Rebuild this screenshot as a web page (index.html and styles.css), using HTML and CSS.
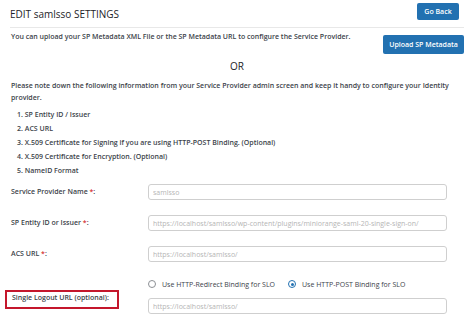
FILE: index.html
```html
<!DOCTYPE html>
<html lang="en">
<head>
<meta charset="utf-8">
<title>EDIT samlsso SETTINGS</title>
<link rel="stylesheet" href="styles.css">
</head>
<body>
<div class="page">
  <div class="header">
    <h1 class="title">EDIT samlsso SETTINGS</h1>
    <button class="btn btn-back" type="button">Go Back</button>
  </div>
  <div class="intro">
    <p class="intro-text">You can upload your SP Metadata XML File or the SP Metadata URL to configure the Service Provider.</p>
    <button class="btn btn-upload" type="button">Upload SP Metadata</button>
  </div>
  <div class="or">OR</div>
  <p class="note">Please note down the following information from your Service Provider admin screen and keep it handy to configure your Identity provider.</p>
  <ol class="items">
    <li>SP Entity ID / Issuer</li>
    <li>ACS URL</li>
    <li>X.509 Certificate for Signing if you are using HTTP-POST Binding. (Optional)</li>
    <li>X.509 Certificate for Encryption. (Optional)</li>
    <li>NameID Format</li>
  </ol>
  <div class="form">
    <label class="label">Service Provider Name <span class="req">*</span>:</label>
    <input class="input" type="text" value="samlsso">
    <label class="label">SP Entity ID or Issuer <span class="req">*</span>:</label>
    <input class="input" type="text" value="https://localhost/samlsso/wp-content/plugins/miniorange-saml-20-single-sign-on/">
    <label class="label">ACS URL <span class="req">*</span>:</label>
    <input class="input" type="text" value="https://localhost/samlsso/">
    <div class="spacer"></div>
    <div class="radios">
      <label class="radio"><span class="dot"></span>Use HTTP-Redirect Binding for SLO</label>
      <label class="radio"><span class="dot checked"></span>Use HTTP-POST Binding for SLO</label>
    </div>
    <label class="label highlight">Single Logout URL (optional):</label>
    <input class="input" type="text" value="https://localhost/samlsso/">
  </div>
</div>
</body>
</html>
```

FILE: styles.css
```css
* { box-sizing: border-box; }
html, body { margin: 0; padding: 0; background: #fff; }
body {
  font-family: "Open Sans", "Noto Sans", "Liberation Sans", sans-serif;
  color: #3c434a;
  font-size: 7px;
  font-weight: 600;
}
.page { padding: 3px 10px 0 10px; }
.header {
  display: flex;
  justify-content: space-between;
  align-items: flex-start;
  padding-bottom: 6px;
  border-bottom: 1px solid #e8e8e8;
}
.title {
  margin: 4px 0 0 0;
  font-size: 10px;
  font-weight: 400;
  color: #1d2327;
  line-height: 14px;
}
.btn {
  font-family: inherit;
  background: #2271b1;
  color: #fff;
  border: none;
  border-radius: 2px;
  font-weight: 600;
  font-size: 7px;
  padding: 0;
  height: 17px;
}
.btn-back { width: 42px; margin-right: 5px; }
.btn-upload { width: 81px; height: 19px; margin-top: 7px; }
.intro {
  display: flex;
  justify-content: space-between;
  align-items: flex-start;
}
.intro-text { margin: 4px 0 0 1px; line-height: 10px; }
.or {
  text-align: center;
  font-size: 10px;
  font-weight: 400;
  color: #1d2327;
  margin-top: 5px;
  line-height: 14px;
}
.note { margin: 7px 0 0 1px; line-height: 12px; }
.items {
  margin: 4px 0 0 0;
  line-height: 14px;
  list-style-position: inside;
  padding-left: 7px;
}
.form {
  display: grid;
  grid-template-columns: 138px 299px;
  row-gap: 15px;
  align-items: center;
  margin-top: 6px;
}
.label { padding-left: 1px; color: #3c434a; line-height: 10px; }
.req { color: #d63638; }
.input {
  height: 16px;
  border: 1px solid #cfcfcf;
  border-radius: 3px;
  padding: 0 4px;
  font-family: inherit;
  font-size: 7px;
  font-weight: 400;
  color: #b5b5b5;
  width: 100%;
}
.radios {
  display: flex;
  gap: 13px;
  align-items: center;
  height: 12px;
  margin: 1px 0 -7px 0;
  font-weight: 400;
}
.radio { display: flex; align-items: center; gap: 6px; }
.dot {
  width: 8px; height: 8px;
  border: 1px solid #8c8f94;
  border-radius: 50%;
  display: inline-block;
  position: relative;
  background: #fff;
}
.dot.checked { border-color: #2271b1; }
.dot.checked::after {
  content: "";
  position: absolute;
  left: 1.5px; top: 1.5px;
  width: 3px; height: 3px;
  border-radius: 50%;
  background: #2271b1;
}
.highlight {
  align-self: start;
  border: 2px solid #c4172c;
  margin: -8px 0 0 -5px;
  padding: 1px 5px 4px 5px;
  width: 114px;
}
```
